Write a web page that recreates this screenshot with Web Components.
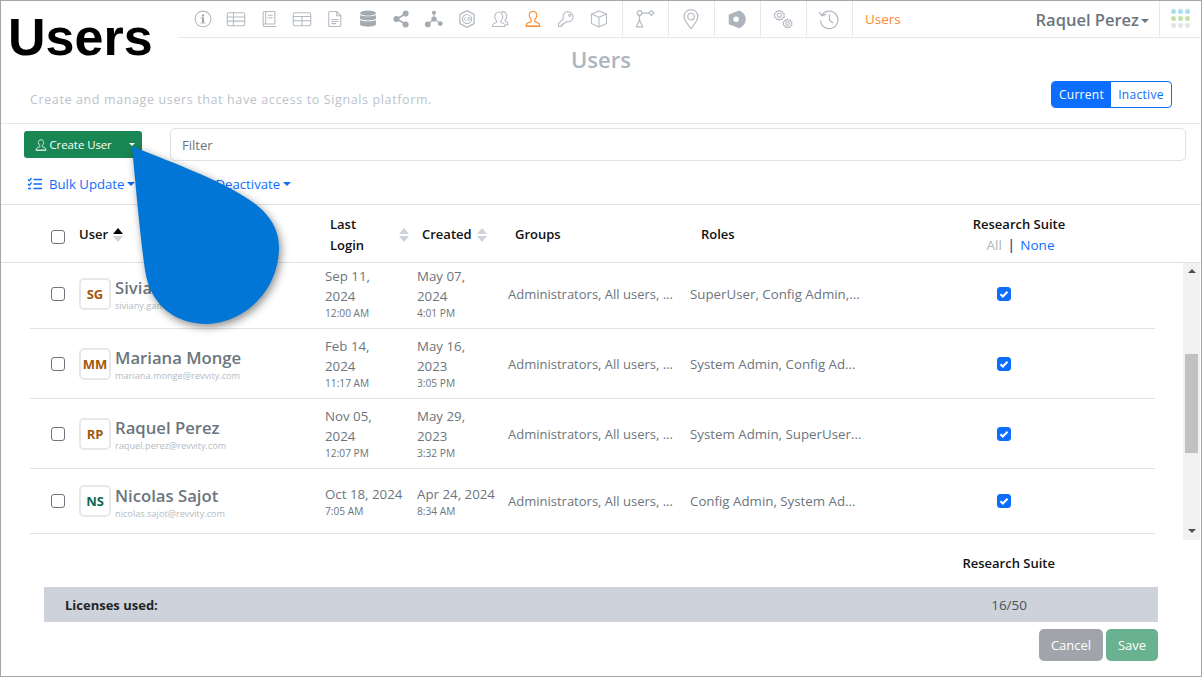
<!DOCTYPE html>
<html>
<head>
<meta charset="utf-8">
<title>Users</title>
<style>
  html, body { margin: 0; background: #fff; }
  body { font-family: "Open Sans", "Noto Sans", sans-serif; }
</style>
</head>
<body>
<sig-app>
  <sig-nav></sig-nav>
  <sig-head title="Users" sub="Create and manage users that have access to Signals platform."></sig-head>
  <sig-toolbar></sig-toolbar>
  <sig-thead></sig-thead>
  <sig-scroll>
    <sig-row ini="SG" tone="#a3570c" name="Siviany Gamboa" mail="siviany.gamboa@revvity.com" d1="Sep 11, 2024" t1="12:00 AM" d2="May 07, 2024" t2="4:01 PM" groups="Administrators, All users, ..." roles="SuperUser, Config Admin,..."></sig-row>
    <sig-row ini="MM" tone="#a3570c" name="Mariana Monge" mail="mariana.monge@revvity.com" d1="Feb 14, 2024" t1="11:17 AM" d2="May 16, 2023" t2="3:05 PM" groups="Administrators, All users, ..." roles="System Admin, Config Ad..."></sig-row>
    <sig-row ini="RP" tone="#a3570c" name="Raquel Perez" mail="raquel.perez@revvity.com" d1="Nov 05, 2024" t1="12:07 PM" d2="May 29, 2023" t2="3:32 PM" groups="Administrators, All users, ..." roles="System Admin, SuperUser..."></sig-row>
    <sig-row short ini="NS" tone="#0b6b52" name="Nicolas Sajot" mail="nicolas.sajot@revvity.com" d1="Oct 18, 2024" t1="7:05 AM" d2="Apr 24, 2024" t2="8:34 AM" groups="Administrators, All users, ..." roles="Config Admin, System Ad..."></sig-row>
  </sig-scroll>
  <sig-license></sig-license>
  <sig-drop></sig-drop>
</sig-app>

<script>
const STROKE = '#b5bbc2';
const ICONS = {
  info: `<circle cx="12" cy="12" r="9.5"/><rect x="10.8" y="10.2" width="2.4" height="6.6" fill="#9aa2aa" stroke="none"/><circle cx="12" cy="7.8" r="1.4" fill="#9aa2aa" stroke="none"/><path d="M9.6 10.6h2M9.6 16.8h4.8"/>`,
  table: `<rect x="1.500" y="4.500" width="21" height="15.500" rx="2"/><path d="M1.500 9.500h21M1.500 14.500h21M9 4.500v15.500"/>`,
  book: `<path d="M5 19V4.500a1.500 1.500 0 0 1 1.500-1.500H19v15H6.500A1.500 1.500 0 0 0 5 19.500 1.500 1.500 0 0 0 6.500 21H20.500M8 3v15M11 7.500h5M11 10.500h5"/>`,
  grid: `<rect x="1.500" y="4.500" width="21" height="15.500" rx="2"/><path d="M1.500 9h21M1.500 14h21M12 9v11"/>`,
  doc: `<path d="M6 3h8l5 5v11.500a1.500 1.500 0 0 1-1.500 1.500h-11.500a1.500 1.500 0 0 1-1.500-1.500v-15a1.500 1.500 0 0 1 1.500-1.500zM14 3v5h5M8 12.500h8M8 15h8M8 17.500h5"/>`,
  db: `<g fill="#a3aab1" stroke="none"><ellipse cx="12" cy="5" rx="9.500" ry="3.200"/><path d="M2.500 7.300c2 2 17 2 19 0v4.200c-1 3-18 3-19 0zM2.500 13.200c2 2 17 2 19 0v5.500c-1 3.400-18 3.400-19 0z"/></g>`,
  share: `<g fill="#a3aab1" stroke="#a3aab1"><path d="M17 6l-10 6 10 6" fill="none" stroke-width="2"/><circle cx="17.500" cy="5.500" r="3"/><circle cx="6.500" cy="12" r="3"/><circle cx="17.500" cy="18.500" r="3"/></g>`,
  net: `<g fill="#a3aab1" stroke="#a3aab1"><path d="M12 4v8M12 12l-7 6M12 12l7 5" fill="none" stroke-width="1.300"/><circle cx="12" cy="4.500" r="1.800"/><circle cx="12" cy="12" r="2.500"/><circle cx="4.500" cy="18.500" r="2.800"/><circle cx="19.500" cy="17.500" r="2.300"/></g>`,
  hex: `<path d="M12 2l8.500 4.500v11L12 22l-8.500-4.500v-11z" stroke-width="1.600"/><circle cx="12" cy="12" r="5.500" stroke-width="1.300"/><path d="M11 10.500a1.700 1.700 0 1 0 0 3M13.500 10.300v3.400h.7a1.700 1.700 0 0 0 0-3.400z" stroke-width="1"/>`,
  users: `<path d="M3 21v-1.500c0-2 3.500-2.800 5-3.800v-1.500c-1.500-1-2.300-3-2.300-5.200C5.700 6 8 3.500 10.500 3.500S15.300 6 15.300 9c0 2.200-.8 4.200-2.300 5.200v1.500c1.500 1 5 1.800 5 3.800V21zM14 3.300c3-.8 6 1.500 6 5 0 2-.7 3.700-2 4.700v1.500c1.200.8 3.500 1.300 3.500 3v1.500h-2"/>`,
  user: `<path d="M4 20.500v-1.800c0-2.200 4.500-2.700 5.800-3.700v-2.300C8.400 11.500 7.500 9.500 7.500 7.500 7.500 4.800 9.500 3 12 3s4.500 1.800 4.500 4.500c0 2-.9 4-2.300 5.200V15c1.300 1 5.800 1.500 5.800 3.700v1.800z"/><path d="M3.500 20.700h17"/>`,
  key: `<path d="M14.500 3.500a6 6 0 0 1 0 12c-.8 0-1.500-.1-2.200-.4L10.500 17H8.500v2h-2v2H3v-3.500l6-6c-.3-.7-.5-1.400-.5-2a6 6 0 0 1 6-6.500z"/><circle cx="16.500" cy="7.500" r="1.300"/>`,
  cube: `<path d="M12 2.500l9 3.500v11.500l-9 4-9-4V6zM3 6l9 4 9-4M12 10v11.500"/>`,
  branch: `<circle cx="6" cy="5.500" r="2.600"/><path d="M8.600 5.500h7.500M6 8v5"/><path d="M19 3l2.800 2.500L19 8l-2.800-2.500z"/><path d="M6 13l3.500 7.500h-7z"/>`,
  pin: `<path d="M12 22.500C8 17.500 4.500 13.500 4.500 9.300a7.500 7.500 0 0 1 15 0c0 4.200-3.500 8.200-7.500 13.200z"/><circle cx="12" cy="9.300" r="3.600"/>`,
  shape: `<path fill="#aeb4bb" stroke="none" fill-rule="evenodd" d="M3 7L14.500 2.800C19 5 21.500 8 21.500 12.300C21.500 16.500 19 20 14.500 22L3 17.800zM11 9.300a3 3 0 1 0 0 6 3 3 0 0 0 0-6z"/>`,
  gears: `<g stroke-width="1.200"><circle cx="8" cy="8" r="2.200"/><path d="M8 2.500l1.300 1.300 1.900-.3.500 1.900 1.800.8-.6 1.800.6 1.800-1.800.8-.5 1.900-1.900-.3L8 13.500l-1.300-1.300-1.900.3-.5-1.900-1.800-.8.6-1.800-.6-1.800 1.800-.8.5-1.900 1.900.3z"/><circle cx="17" cy="17" r="1.900"/><path d="M17 12.200l1.200 1.100 1.600-.2.500 1.600 1.500.7-.5 1.600.5 1.600-1.500.7-.5 1.600-1.600-.2-1.200 1.100-1.200-1.100-1.600.2-.5-1.600-1.500-.7.5-1.600-.5-1.600 1.500-.7.5-1.600 1.600.2z"/></g>`,
  history: `<path d="M4.500 7.500A9.500 9.500 0 1 1 2.800 14M1.500 5l3 3.500L8.500 7M12.500 7.500v5.500l3.500 3" stroke-width="1.400"/>`
};

function svgIcon(name, size, color) {
  return `<svg width="${size}" height="${size}" viewBox="0 0 24 24" fill="none" stroke="${color || STROKE}" stroke-width="1.300" stroke-linejoin="round" stroke-linecap="round">${ICONS[name]}</svg>`;
}

class SigApp extends HTMLElement {
  connectedCallback() {
    this.attachShadow({ mode: 'open' });
    this.shadowRoot.innerHTML = `
      <style>
        :host {
          display: flex;
          flex-direction: column;
          position: relative;
          box-sizing: border-box;
          width: 1202px;
          height: 677px;
          overflow: hidden;
          border: 1px solid #a6a6a6;
          background: #fff;
          font-family: "Open Sans", "Noto Sans", sans-serif;
          color: #6c757d;
        }
        .label {
          position: absolute;
          left: 7px;
          top: 3px;
          font: bold 52px/66px "Liberation Sans", Arial, sans-serif;
          color: #000;
        }
      </style>
      <div class="label">Users</div>
      <slot></slot>
    `;
  }
}

class SigNav extends HTMLElement {
  connectedCallback() {
    this.attachShadow({ mode: 'open' });
    const first = ['info','table','book','grid','doc','db','share','net','hex','users','user','key','cube'];
    const second = ['branch','pin','shape','gears','history'];
    const dots = ['#a9dff3','#a9dff3','#a9dff3','#c3e0a9','#c3e0a9','#c3e0a9','#e1e3e6','#e1e3e6','#e1e3e6'];
    this.shadowRoot.innerHTML = `
      <style>
        :host {
          display: flex;
          align-items: stretch;
          box-sizing: border-box;
          height: 37px;
          margin-left: 177px;
          padding-left: 8.5px;
          border-bottom: 1px solid #e6e8ea;
        }
        .item { width: 33px; display: flex; align-items: center; justify-content: center; margin-top: -1px; }
        .sec { width: 45px; border-left: 1px solid #e6e8ea; display: flex; align-items: center; justify-content: center; margin-bottom: 1px; padding-top: 1px; }
        .sec svg { margin-right: 2px; }
        .start { margin-left: 6.5px; }
        .cur { border-left: 1px solid #e6e8ea; padding: 1px 0 0 12px; display: flex; align-items: center; color: #fb8a2e; font-size: 13.5px; margin-bottom: 1px; }
        .me { margin-left: auto; display: flex; align-items: center; gap: 2px; padding: 0 10px 0 0; font-size: 16.500px; font-weight: 600; color: #6c757d; }
        .caret { width: 0; height: 0; border: 4px solid transparent; border-top-color: #6c757d; border-bottom-width: 0; margin-top: 3px; }
        .apps { width: 41px; border-left: 1px solid #e6e8ea; display: flex; align-items: center; justify-content: center; margin-bottom: 1px; }
        .dots { display: grid; grid-template-columns: repeat(3, 5px); gap: 2px; margin-left: -1px; }
        .dots span { width: 5px; height: 5px; border-radius: 50%; }
      </style>
      ${first.map((n) => `<div class="item">${svgIcon(n, 20, n === 'user' ? '#fb8a2e' : STROKE)}</div>`).join('')}
      ${second.map((n, i) => `<div class="sec${i ? '' : ' start'}">${svgIcon(n, 22)}</div>`).join('')}
      <div class="cur">Users</div>
      <div class="me">Raquel Perez<span class="caret"></span></div>
      <div class="apps"><div class="dots">${dots.map((c) => `<span style="background:${c}"></span>`).join('')}</div></div>
    `;
  }
}

class SigHead extends HTMLElement {
  connectedCallback() {
    this.attachShadow({ mode: 'open' });
    this.shadowRoot.innerHTML = `
      <style>
        :host {
          display: block;
          box-sizing: border-box;
          height: 86px;
          border-bottom: 1px solid #e6e8ea;
        }
        h1 { margin: 0; padding-top: 5px; height: 40px; box-sizing: border-box; text-align: center; font-size: 22px; line-height: 32px; font-weight: 600; color: #adb5bd; }
        .line { display: flex; align-items: center; justify-content: space-between; padding: 3px 29px 0; height: 27px; }
        .sub { padding-top: 10px; font-size: 12.500px; letter-spacing: .62px; color: #bcc3ca; }
        .seg { display: flex; height: 27px; box-sizing: border-box; border: 1px solid #0d6efd; border-radius: 4px; overflow: hidden; font-size: 12px; letter-spacing: .3px; }
        .seg span { display: flex; align-items: center; justify-content: center; }
        .on { width: 59px; background: #0d6efd; color: #fff; }
        .off { width: 60px; color: #0d6efd; }
      </style>
      <h1>${this.getAttribute('title')}</h1>
      <div class="line">
        <div class="sub">${this.getAttribute('sub')}</div>
        <div class="seg"><span class="on">Current</span><span class="off">Inactive</span></div>
      </div>
    `;
  }
}

class SigToolbar extends HTMLElement {
  connectedCallback() {
    this.attachShadow({ mode: 'open' });
    this.shadowRoot.innerHTML = `
      <style>
        :host {
          display: block;
          box-sizing: border-box;
          height: 81px;
          padding: 4px 15px 0 23px;
          border-bottom: 1px solid #e0e3e7;
        }
        .top { display: flex; align-items: center; gap: 28px; }
        .btn { display: flex; align-items: center; width: 118px; height: 27px; box-sizing: border-box; padding: 0 0 0 9.500px; background: #198754; color: #fff; border-radius: 3px; font-size: 11.300px; }
        .btn svg { margin-right: 2px; }
        .btn i { width: 0; height: 0; margin-left: 17.500px; border: 3.500px solid transparent; border-top-color: #fff; border-bottom-width: 0; }
        .filter { flex: 1; height: 33px; box-sizing: border-box; display: flex; align-items: center; padding-left: 11px; border: 1px solid #dee2e6; border-radius: 5px; font-size: 13px; color: #6c757d; }
        .acts { display: flex; align-items: center; margin-top: 14px; color: #0d6efd; font-size: 13.200px; }
        .acts svg { margin: 0 6px 0 3px; }
        .acts i { width: 0; height: 0; margin-left: 3px; border: 4px solid transparent; border-top-color: #0d6efd; border-bottom-width: 0; }
        .gap { margin-left: 80px; }
      </style>
      <div class="top">
        <div class="btn">${svgIcon('user', 14, '#fff')}Create User<i></i></div>
        <div class="filter">Filter</div>
      </div>
      <div class="acts">
        <svg width="16" height="14" viewBox="0 0 16 14" fill="none" stroke="#0d6efd" stroke-width="1.300"><path d="M1 2.500l1.300 1.300L4.500 1M1 7l1.300 1.300L4.500 5.500M1 11.500h3M6.500 2.500H15M6.500 7H15M6.500 11.500H15"/></svg>
        <span>Bulk Update</span><i></i>
        <span class="gap">Deactivate</span><i></i>
      </div>
    `;
  }
}

class SigSort extends HTMLElement {
  connectedCallback() {
    this.attachShadow({ mode: 'open' });
    const up = this.hasAttribute('active') ? '#000' : '#ced3d9';
    this.shadowRoot.innerHTML = `
      <style>
        :host { display: inline-flex; flex-direction: column; gap: 2px; }
        i { width: 0; height: 0; border-left: 5.500px solid transparent; border-right: 5.500px solid transparent; }
        .u { border-bottom: 6px solid ${up}; }
        .d { border-top: 6px solid #ced3d9; }
      </style>
      <i class="u"></i><i class="d"></i>
    `;
  }
}

class SigCheck extends HTMLElement {
  connectedCallback() {
    this.attachShadow({ mode: 'open' });
    const on = this.hasAttribute('checked');
    this.shadowRoot.innerHTML = `
      <style>
        :host {
          display: inline-flex;
          align-items: center;
          justify-content: center;
          box-sizing: border-box;
          width: 14px;
          height: 14px;
          border-radius: 3px;
          border: ${on ? '1px solid #0d6efd' : '1px solid #6c757d'};
          background: ${on ? '#0d6efd' : '#fff'};
        }
      </style>
      ${on ? '<svg width="10" height="10" viewBox="0 0 10 10" fill="none" stroke="#fff" stroke-width="2"><path d="M1.500 5.200l2.300 2.300L8.500 2.800"/></svg>' : ''}
    `;
  }
}

class SigThead extends HTMLElement {
  connectedCallback() {
    this.attachShadow({ mode: 'open' });
    this.shadowRoot.innerHTML = `
      <style>
        :host {
          display: grid;
          grid-template-columns: 49px 251px 92px 93px 186px 203px 230px;
          align-items: center;
          box-sizing: border-box;
          height: 58px;
          padding: 2px 0 0 29px;
          border-bottom: 1px solid #dee2e6;
          font-size: 13px;
          font-weight: 600;
          line-height: 21px;
          color: #111;
        }
        .chk { padding-left: 21px; display: flex; margin-top: 5px; }
        .col { display: flex; align-items: center; }
        .last span { width: 69px; }
        .last span b { display: block; width: min-content; font-weight: inherit; }
        .gap { margin-left: 5px; }
        .suite { text-align: center; margin-top: -1px; }
        .links { font-weight: 400; color: #adb5bd; font-size: 13.500px; line-height: 20px; padding-left: 3px; word-spacing: 1px; }
        .links b { font-weight: 400; color: #0d6efd; }
        .links u { text-decoration: none; color: #0d4a9b; padding: 0 1px; font-weight: 600; }
      </style>
      <div class="chk"><sig-check></sig-check></div>
      <div class="col">User<sig-sort class="gap" active></sig-sort></div>
      <div class="col last"><span><b>Last Login</b></span><sig-sort></sig-sort></div>
      <div class="col">Created<sig-sort class="gap"></sig-sort></div>
      <div>Groups</div>
      <div>Roles</div>
      <div class="suite">Research Suite<div class="links">All <u>|</u> <b>None</b></div></div>
    `;
  }
}

class SigScroll extends HTMLElement {
  connectedCallback() {
    this.attachShadow({ mode: 'open' });
    this.shadowRoot.innerHTML = `
      <style>
        :host { display: flex; height: 277px; overflow: hidden; }
        .list { flex: 1; margin-top: -4px; padding: 0 28px 0 29px; }
        .bar { width: 17px; margin-right: 1px; background: #f1f1f1; display: flex; flex-direction: column; align-items: center; }
        .bar i { width: 0; height: 0; border-left: 4px solid transparent; border-right: 4px solid transparent; }
        .up { margin-top: 6px; border-bottom: 4px solid #505050; }
        .thumb { width: 13px; height: 99px; margin-top: 81px; background: #c1c1c1; }
        .dn { margin-top: auto; margin-bottom: 7px; border-top: 4px solid #505050; }
      </style>
      <div class="list"><slot></slot></div>
      <div class="bar"><i class="up"></i><div class="thumb"></div><i class="dn"></i></div>
    `;
  }
}

class SigRow extends HTMLElement {
  connectedCallback() {
    this.attachShadow({ mode: 'open' });
    const a = (k) => this.getAttribute(k);
    const short = this.hasAttribute('short');
    this.shadowRoot.innerHTML = `
      <style>
        :host {
          display: grid;
          grid-template-columns: 49px 246px 92px 91px 182px 170px 288px 1fr;
          align-items: center;
          box-sizing: border-box;
          height: ${short ? 65 : 70}px;
          border-bottom: 1px solid #dee2e6;
          font-size: 13px;
          color: #6c757d;
        }
        .chk { padding-left: 21px; display: flex; }
        .who { display: flex; align-items: center; gap: 4px; }
        .ava { width: 32px; height: 32px; box-sizing: border-box; display: flex; align-items: center; justify-content: center; border: 2px solid #e6e8ec; border-radius: 5px; font-size: 13px; font-weight: 700; color: ${a('tone')}; }
        .txt { padding-top: 2px; }
        .name { font-size: 16.700px; font-weight: 600; line-height: 22px; white-space: nowrap; }
        .mail { font-size: 9.200px; line-height: 12px; margin-top: 1px; color: #b4bbc2; white-space: nowrap; }
        .stamp { margin-top: ${short ? 0 : -2}px; }
        .date { width: ${short ? 'auto' : '60px'}; font-size: 13.300px; line-height: 20px; white-space: ${short ? 'nowrap' : 'normal'}; }
        .time { font-size: 10.200px; line-height: 14px; }
        .one { white-space: nowrap; }
        .roles { font-size: 13.300px; }
        .ctr { display: flex; justify-content: center; }
      </style>
      <div class="chk"><sig-check></sig-check></div>
      <div class="who">
        <div class="ava">${a('ini')}</div>
        <div class="txt"><div class="name">${a('name')}</div><div class="mail">${a('mail')}</div></div>
      </div>
      <div class="stamp"><div class="date">${a('d1')}</div><div class="time">${a('t1')}</div></div>
      <div class="stamp"><div class="date">${a('d2')}</div><div class="time">${a('t2')}</div></div>
      <div class="one">${a('groups')}</div>
      <div class="one roles">${a('roles')}</div>
      <div class="ctr"><sig-check checked></sig-check></div>
    `;
  }
}

class SigLicense extends HTMLElement {
  connectedCallback() {
    this.attachShadow({ mode: 'open' });
    this.shadowRoot.innerHTML = `
      <style>
        :host { display: block; padding: 0 43px; font-size: 13px; }
        .cap { height: 47px; box-sizing: border-box; padding-top: 13px; font-weight: 600; color: #111; text-align: right; padding-right: 103px; line-height: 20px; }
        .bar { display: flex; align-items: center; justify-content: space-between; height: 35px; padding: 0 131px 0 21px; background: #ced3db; color: #495057; }
        .bar b { font-weight: 700; color: #212529; }
        .bar span { font-size: 13.500px; }
        .btns { display: flex; justify-content: flex-end; gap: 3px; margin-top: 7px; }
        .btns span { display: flex; align-items: center; justify-content: center; height: 32px; border-radius: 5px; color: #fff; }
        .c { width: 64px; background: #a1a5ab; }
        .s { width: 52px; background: #68b28f; }
      </style>
      <div class="cap">Research Suite</div>
      <div class="bar"><b>Licenses used:</b><span>16/50</span></div>
      <div class="btns"><span class="c">Cancel</span><span class="s">Save</span></div>
    `;
  }
}

class SigDrop extends HTMLElement {
  connectedCallback() {
    this.attachShadow({ mode: 'open' });
    this.shadowRoot.innerHTML = `
      <style>
        :host { position: absolute; left: 0; top: 0; width: 400px; height: 400px; pointer-events: none; }
        svg { display: block; overflow: visible; filter: drop-shadow(2px 3px 4px rgba(0,0,0,.45)); }
      </style>
      <svg width="400" height="400" viewBox="1 1 400 400"><path fill="#0276d6" d="M132 146C165 160 213 177 240 194C265 208 279 225 279 247C279 290 245 323 207 324C175 324 150 305 145 270C140 235 136 190 132 146Z"/></svg>
    `;
  }
}

customElements.define('sig-app', SigApp);
customElements.define('sig-nav', SigNav);
customElements.define('sig-head', SigHead);
customElements.define('sig-toolbar', SigToolbar);
customElements.define('sig-sort', SigSort);
customElements.define('sig-check', SigCheck);
customElements.define('sig-thead', SigThead);
customElements.define('sig-scroll', SigScroll);
customElements.define('sig-row', SigRow);
customElements.define('sig-license', SigLicense);
customElements.define('sig-drop', SigDrop);
</script>
</body>
</html>
